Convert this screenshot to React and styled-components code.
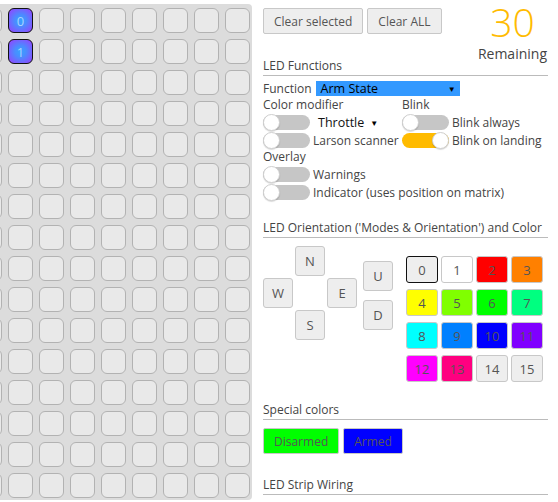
import React from "react";
import styled, { createGlobalStyle } from "styled-components";

const GlobalStyle = createGlobalStyle`
  html, body {
    margin: 0;
    padding: 0;
    background: #fff;
  }
  body {
    font-family: "Open Sans", "Liberation Sans", sans-serif;
    font-size: 12px;
    color: #444;
  }
`;

const COLORS = [
  "#eeeeee", "#ffffff", "#ff0000", "#ff8000",
  "#ffff00", "#80ff00", "#00ff00", "#00ff80",
  "#00ffff", "#0080ff", "#0000ff", "#8000ff",
  "#ff00ff", "#ff0080", "#eeeeee", "#eeeeee",
];

function App() {
  const cells = [];
  for (let r = 0; r < 16; r++) {
    for (let c = 0; c < 9; c++) {
      const active = c === 1 && r < 2;
      cells.push(
        <Led key={r + "-" + c} $active={active}>
          {active ? r : ""}
        </Led>
      );
    }
  }

  return (
    <>
      <GlobalStyle />
      <Page>
        <MatrixPanel>
          <Matrix>{cells}</Matrix>
        </MatrixPanel>

        <Side>
          <TopRow>
            <Buttons>
              <Button>Clear selected</Button>
              <Button>Clear ALL</Button>
            </Buttons>
            <Counter>
              <Count>30</Count>
              <CountLabel>Remaining</CountLabel>
            </Counter>
          </TopRow>

          <Heading>LED Functions</Heading>
          <FunctionRow>
            <span>Function</span>
            <FunctionSelect>
              <span>Arm State</span>
              <Arrow>▼</Arrow>
            </FunctionSelect>
          </FunctionRow>

          <Columns>
            <div>
              <Label>Color modifier</Label>
              <ToggleRow>
                <Switch />
                <ThrottleSelect>
                  Throttle <Arrow>▼</Arrow>
                </ThrottleSelect>
              </ToggleRow>
              <ToggleRow>
                <Switch />
                <span>Larson scanner</span>
              </ToggleRow>
            </div>
            <div>
              <Label>Blink</Label>
              <ToggleRow>
                <Switch />
                <span>Blink always</span>
              </ToggleRow>
              <ToggleRow>
                <Switch $on />
                <span>Blink on landing</span>
              </ToggleRow>
            </div>
          </Columns>

          <OverlayLabel>Overlay</OverlayLabel>
          <ToggleRow>
            <Switch />
            <span>Warnings</span>
          </ToggleRow>
          <ToggleRow>
            <Switch />
            <span>Indicator (uses position on matrix)</span>
          </ToggleRow>

          <Heading $gap={21}>
            LED Orientation ('Modes &amp; Orientation') and Color
          </Heading>
          <Orientation>
            <DirPad>
              <DirButton $col={2} $row={1}>N</DirButton>
              <DirButton $col={1} $row={2}>W</DirButton>
              <DirButton $col={3} $row={2}>E</DirButton>
              <DirButton $col={2} $row={3}>S</DirButton>
            </DirPad>
            <UpDown>
              <DirButton>U</DirButton>
              <DirButton>D</DirButton>
            </UpDown>
            <ColorGrid>
              {COLORS.map((c, i) => (
                <ColorButton key={i} $color={c} $selected={i === 0}>
                  {i}
                </ColorButton>
              ))}
            </ColorGrid>
          </Orientation>

          <Heading $gap={22}>Special colors</Heading>
          <SpecialRow>
            <SpecialButton $color="#00ff00">Disarmed</SpecialButton>
            <SpecialButton $color="#0000ff">Armed</SpecialButton>
          </SpecialRow>

          <Heading $gap={25}>LED Strip Wiring</Heading>
        </Side>
      </Page>
    </>
  );
}

export default App;

function Switch({ $on }) {
  return (
    <Track $on={$on}>
      <Knob />
    </Track>
  );
}

const Page = styled.div`
  display: flex;
  width: 558px;
  height: 502px;
  overflow: hidden;
`;

/* led matrix */
const MatrixPanel = styled.div`
  margin-top: 4px;
  width: 252px;
  height: 496px;
  flex-shrink: 0;
  background: #dcdcdc;
  border-radius: 0 4px 4px 0;
  overflow: hidden;
`;

const Matrix = styled.div`
  display: grid;
  grid-template-columns: repeat(9, 25px);
  grid-auto-rows: 25px;
  gap: 6px;
  margin-left: -23px;
  padding-top: 4px;
`;

const Led = styled.div`
  box-sizing: border-box;
  border-radius: 6px;
  border: 1px solid ${(p) => (p.$active ? "#111" : "#b2b2b2")};
  background: ${(p) =>
    p.$active
      ? "radial-gradient(ellipse at 50% 50%, #38a2ff 0%, #4a8cff 35%, #8d4aff 90%)"
      : "#e9e9e9"};
  color: #a8d4ff;
  font-size: 13px;
  display: flex;
  align-items: center;
  justify-content: center;
`;

/* side panel */
const Side = styled.div`
  margin-left: 11px;
  width: 285px;
  display: flex;
  flex-direction: column;
`;

const TopRow = styled.div`
  display: flex;
  justify-content: space-between;
  align-items: flex-start;
  height: 60px;
`;

const Buttons = styled.div`
  display: flex;
  gap: 4px;
  margin-top: 8px;
`;

const Button = styled.button`
  box-sizing: border-box;
  height: 26px;
  padding: 0 10px;
  background: #eeeeee;
  border: 1px solid #c8c8c8;
  border-radius: 2px;
  font-family: inherit;
  font-size: 12px;
  color: #555;
`;

const Counter = styled.div`
  display: flex;
  flex-direction: column;
  align-items: center;
  margin-right: 1px;
`;

const Count = styled.div`
  font-size: 39px;
  line-height: 44px;
  font-weight: 300;
  color: #ffbb00;
`;

const CountLabel = styled.div`
  font-size: 14px;
  line-height: 12px;
  margin-top: 4px;
  color: #444;
`;

const Heading = styled.div`
  margin-top: ${(p) => p.$gap || 0}px;
  font-size: 12px;
  line-height: 12px;
  padding-bottom: 3px;
  border-bottom: 1px solid #bbbbbb;
  color: #444;
  white-space: nowrap;
`;

const FunctionRow = styled.div`
  display: flex;
  align-items: center;
  gap: 4px;
  margin-top: 5px;
  height: 15px;
`;

const FunctionSelect = styled.div`
  display: flex;
  align-items: center;
  justify-content: space-between;
  width: 144px;
  height: 15px;
  box-sizing: border-box;
  padding: 0 4px 0 5px;
  background: #3399ff;
  color: #000;
  font-size: 12.5px;
  line-height: 15px;
`;

const Arrow = styled.span`
  font-size: 8px;
  color: #000;
`;

const Columns = styled.div`
  display: grid;
  grid-template-columns: 139px 1fr;
`;

const Label = styled.div`
  line-height: 17px;
`;

const OverlayLabel = styled.div`
  line-height: 16px;
`;

const ToggleRow = styled.div`
  display: flex;
  align-items: center;
  gap: 3px;
  height: 18px;
  white-space: nowrap;
`;

const Track = styled.div`
  display: flex;
  justify-content: ${(p) => (p.$on ? "flex-end" : "flex-start")};
  align-items: center;
  width: 47px;
  height: 15px;
  flex-shrink: 0;
  border-radius: 8px;
  background: ${(p) => (p.$on ? "#ffbb00" : "#c6c6c6")};
`;

const Knob = styled.div`
  box-sizing: border-box;
  width: 17px;
  height: 17px;
  border-radius: 50%;
  background: #fff;
  border: 1px solid #cfcfcf;
  box-shadow: 0 1px 1px rgba(0, 0, 0, 0.15);
`;

const ThrottleSelect = styled.span`
  margin-left: 5px;
  font-size: 12.5px;
  font-weight: 500;
  color: #111;
  display: flex;
  align-items: center;
  gap: 6px;
`;

/* orientation + colour */
const Orientation = styled.div`
  display: flex;
  align-items: flex-start;
  margin-top: 8px;
`;

const DirPad = styled.div`
  display: grid;
  grid-template-columns: repeat(3, 30px);
  grid-template-rows: repeat(3, 30px);
  gap: 2px;
`;

const DirButton = styled.div`
  grid-column: ${(p) => p.$col || "auto"};
  grid-row: ${(p) => p.$row || "auto"};
  box-sizing: border-box;
  width: 30px;
  height: 30px;
  background: #eeeeee;
  border: 1px solid #c8c8c8;
  border-radius: 3px;
  display: flex;
  align-items: center;
  justify-content: center;
  font-size: 13px;
  color: #555;
`;

const UpDown = styled.div`
  display: flex;
  flex-direction: column;
  gap: 9px;
  margin-left: 6px;
  margin-top: 15px;
`;

const ColorGrid = styled.div`
  display: grid;
  grid-template-columns: repeat(4, 32px);
  grid-auto-rows: 27px;
  column-gap: 3px;
  row-gap: 6px;
  margin-left: 13px;
  margin-top: 10px;
`;

const ColorButton = styled.div`
  box-sizing: border-box;
  background: ${(p) => p.$color};
  border: 1px solid ${(p) => (p.$selected ? "#111" : "#c8c8c8")};
  border-radius: 3px;
  display: flex;
  align-items: center;
  justify-content: center;
  font-size: 13px;
  color: #555;
`;

const SpecialRow = styled.div`
  display: flex;
  gap: 4px;
  margin-top: 8px;
`;

const SpecialButton = styled.div`
  box-sizing: border-box;
  height: 26px;
  padding: 0 10px;
  background: ${(p) => p.$color};
  border: 1px solid #c8c8c8;
  border-radius: 2px;
  display: flex;
  align-items: center;
  font-size: 12px;
  color: #555;
`;
